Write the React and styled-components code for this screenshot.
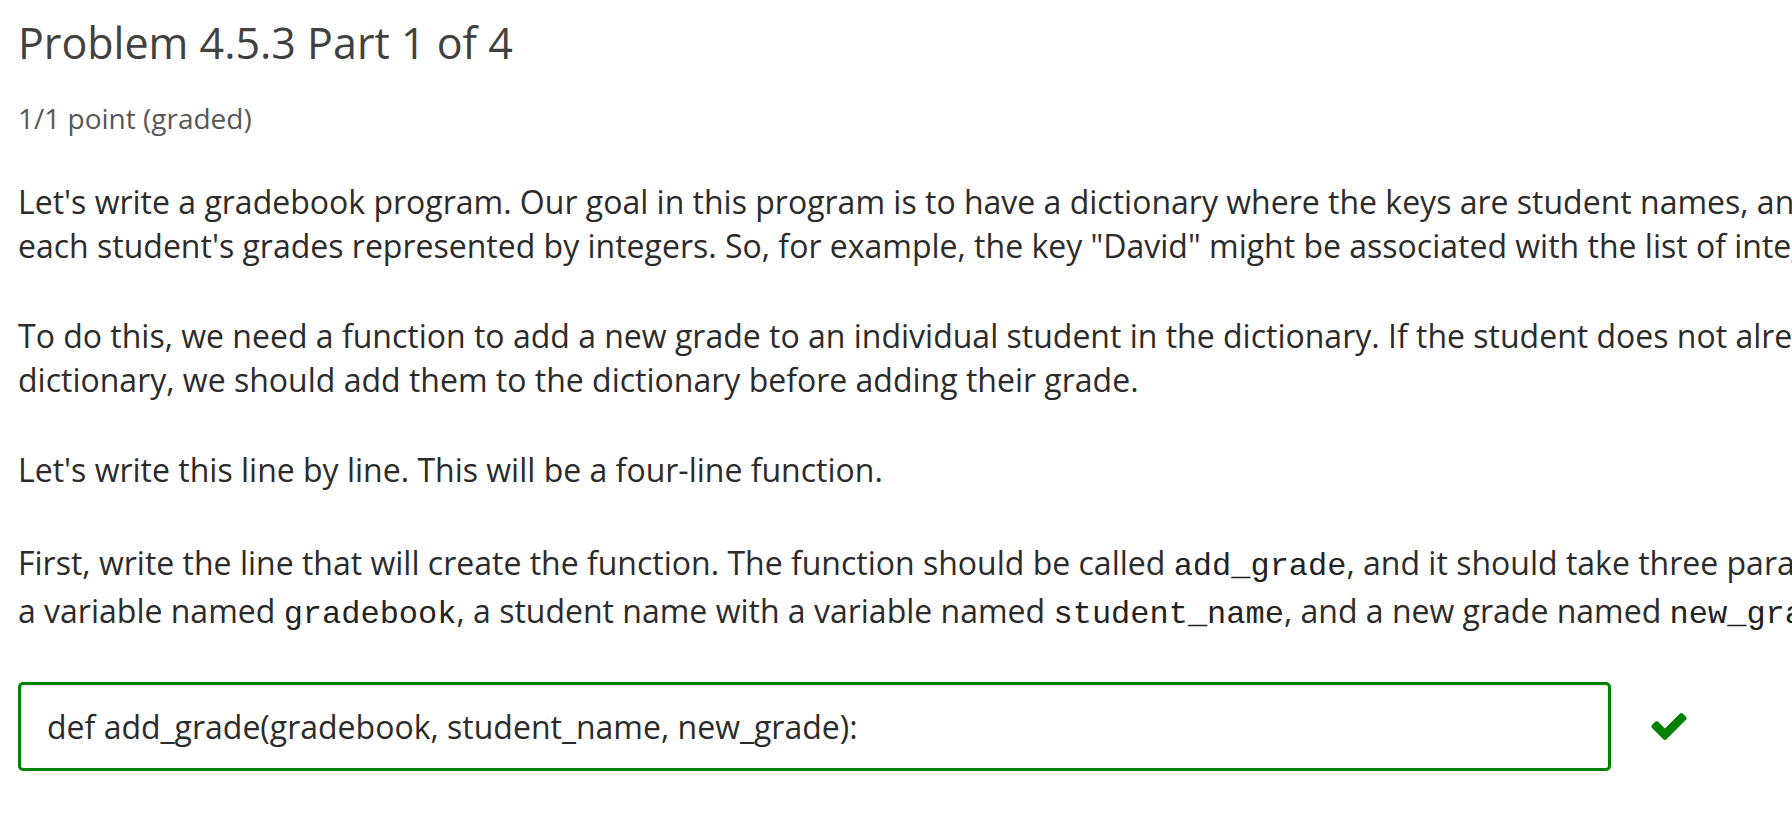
import React from "react";
import styled, { createGlobalStyle } from "styled-components";

const GlobalStyle = createGlobalStyle`
	html, body {
		margin: 0;
		padding: 0;
		background: #ffffff;
		overflow: hidden;
	}
	body {
		font-family: "Open Sans", "Noto Sans", sans-serif;
	}
`;

// fa-check
const CheckIcon = () => (
	<svg width="36" height="27" viewBox="0 0 1550 1188" fill="#008100">
		<path d="M1550 232q0 40-28 68l-724 724-136 136q-28 28-68 28t-68-28l-136-136-362-362q-28-28-28-68t28-68l136-136q28-28 68-28t68 28l294 295 656-657q28-28 68-28t68 28l136 136q28 28 28 68z" />
	</svg>
);

const App = () => {
	return (
		<Page>
			<GlobalStyle />
			<Title>Problem 4.5.3 Part 1 of 4</Title>
			<Points>1/1 point (graded)</Points>
			<Body>
				<Para>
					Let's write a gradebook program. Our goal in this program is to have a dictionary where the keys are student names, and the values are lists of
					<br />
					each student's grades represented by integers. So, for example, the key "David" might be associated with the list of integers [90, 95, 98].
				</Para>
				<Para>
					To do this, we need a function to add a new grade to an individual student in the dictionary. If the student does not already exist in the
					<br />
					dictionary, we should add them to the dictionary before adding their grade.
				</Para>
				<Para>Let's write this line by line. This will be a four-line function.</Para>
				<Para $lh={48}>
					First, write the line that will create the function. The function should be called <Code>add_grade</Code>, and it should take three parameters: a dictionary with
					<br />
					a variable named <Code>gradebook</Code>, a student name with a variable named <Code>student_name</Code>, and a new grade named <Code>new_grade</Code>.
				</Para>
			</Body>
			<AnswerRow>
				<AnswerInput readOnly value="def add_grade(gradebook, student_name, new_grade):" />
				<Status>
					<CheckIcon />
				</Status>
			</AnswerRow>
		</Page>
	);
};

export default App;

const Page = styled.div`
	width: 2400px;
	padding: 18px 18px 0 18px;
	box-sizing: border-box;
`;

const Title = styled.h2`
	margin: 0;
	font-size: 43px;
	line-height: 50px;
	font-weight: 400;
	color: #414141;
`;

const Points = styled.div`
	margin-top: 30px;
	font-size: 28px;
	line-height: 40px;
	color: #575757;
`;

const Body = styled.div`
	margin-top: 42px;
	color: #2b2b2b;
	font-size: 32px;
	line-height: 43.5px;
`;

const Para = styled.p`
	margin: 0 0 47px 0;
	white-space: nowrap;
	line-height: ${(props) => (props.$lh ? `${props.$lh}px` : "43.5px")};
`;

const Code = styled.code`
	font-family: "Liberation Mono", "Courier New", monospace;
	font-size: 32px;
	line-height: 1;
	color: #222222;
`;

const AnswerRow = styled.div`
	display: flex;
	align-items: center;
	gap: 40px;
`;

const AnswerInput = styled.input`
	width: 1593px;
	height: 89px;
	box-sizing: border-box;
	border: 3px solid #008100;
	border-radius: 5px;
	padding: 0 26px;
	font-family: "Open Sans", "Noto Sans", sans-serif;
	font-size: 32px;
	color: #2b2b2b;
	background: #ffffff;
	box-shadow: inset 0 1px 3px rgba(0, 0, 0, 0.12);
	outline: none;
`;

const Status = styled.span`
	display: flex;
	align-items: center;
`;
